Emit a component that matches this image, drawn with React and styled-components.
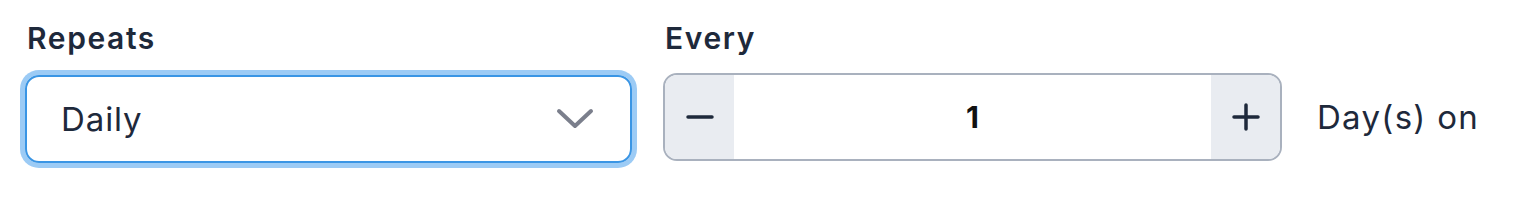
import React from "react";
import styled, { createGlobalStyle } from "styled-components";

const Global = createGlobalStyle`
  body {
    margin: 0;
    background: #ffffff;
    font-family: Inter, "Noto Sans", sans-serif;
    color: #1e293b;
  }
`;

const Row = styled.div`
  display: flex;
  align-items: flex-start;
  gap: 31px;
  padding: 20px 0 40px 25px;
`;

const Field = styled.div`
  display: flex;
  flex-direction: column;
  gap: 16px;
  width: ${(p) => p.width}px;
`;

const Label = styled.label`
  font-size: 30px;
  font-weight: 600;
  letter-spacing: 1.6px;
  color: #1e293b;
  line-height: 36px;
  padding-left: 2px;
`;

const Select = styled.div`
  box-sizing: border-box;
  height: 88px;
  margin-top: 3px;
  border: 2px solid #3a95e4;
  border-radius: 14px;
  box-shadow: 0 0 0 5px #9ccbf5;
  display: flex;
  align-items: center;
  justify-content: space-between;
  padding: 0 36px 0 34px;
  font-size: 33px;
  letter-spacing: 0.9px;
  color: #1e293b;
`;

const Stepper = styled.div`
  box-sizing: border-box;
  height: 88px;
  margin-top: 1px;
  border: 2px solid #a9b1be;
  border-radius: 14px;
  display: flex;
  overflow: hidden;
`;

const StepButton = styled.div`
  width: 69px;
  background: #e9ecf1;
  display: flex;
  align-items: center;
  justify-content: center;
  color: #1e293b;
`;

const Value = styled.div`
  flex: 1;
  display: flex;
  align-items: center;
  justify-content: center;
  font-size: 30px;
  font-weight: 700;
  color: #111111;
`;

const Suffix = styled.div`
  height: 88px;
  margin-top: 53px;
  display: flex;
  align-items: center;
  font-size: 33px;
  letter-spacing: 1.3px;
  color: #1e293b;
  margin-left: 4px;
`;

export default function App() {
  return (
    <>
      <Global />
      <Row>
        <Field width={607}>
          <Label>Repeats</Label>
          <Select>
            <span>Daily</span>
            <svg width="38" height="22" viewBox="0 0 38 22">
              <path d="M3 3 L19 18 L35 3" fill="none" stroke="#7b7f8c" strokeWidth="4" strokeLinecap="round" strokeLinejoin="round" />
            </svg>
          </Select>
        </Field>
        <Field width={619}>
          <Label>Every</Label>
          <Stepper>
            <StepButton>
              <svg width="30" height="30" viewBox="0 0 30 30">
                <path d="M3 15 H27" stroke="#1e293b" strokeWidth="3.5" strokeLinecap="round" />
              </svg>
            </StepButton>
            <Value>1</Value>
            <StepButton>
              <svg width="30" height="30" viewBox="0 0 30 30">
                <path d="M3 15 H27 M15 3 V27" stroke="#1e293b" strokeWidth="3.5" strokeLinecap="round" />
              </svg>
            </StepButton>
          </Stepper>
        </Field>
        <Suffix>Day(s) on</Suffix>
      </Row>
    </>
  );
}
